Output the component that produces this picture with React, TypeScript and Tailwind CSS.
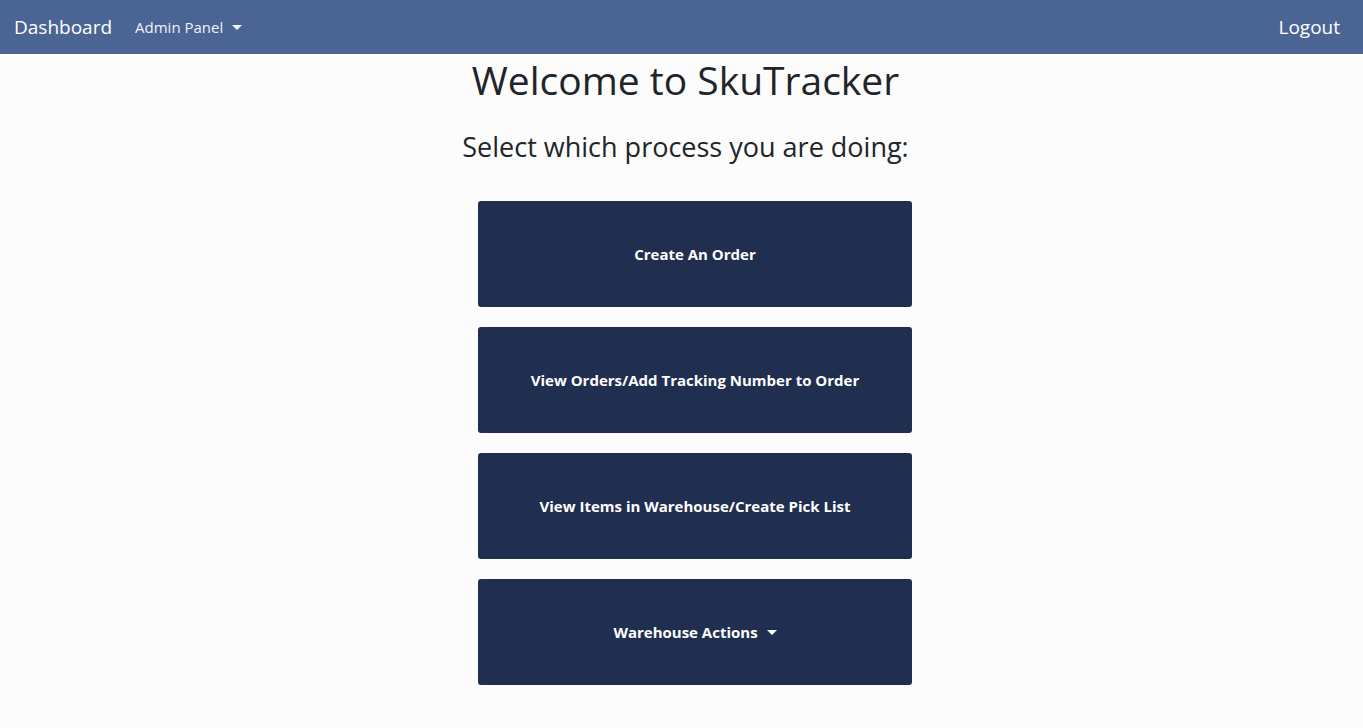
import React from 'react';

const Caret = () => (
    <span className="inline-block ml-[9px] align-[3px] border-x-[5px] border-x-transparent border-t-[5px] border-t-current" />
);

export default function App() {
    const actions = [
        { label: 'Create An Order' },
        { label: 'View Orders/Add Tracking Number to Order' },
        { label: 'View Items in Warehouse/Create Pick List' },
        { label: 'Warehouse Actions', dropdown: true },
    ];

    return (
        <div className="min-h-[728px] bg-[#fcfcfc] text-[#212529]" style={{ fontFamily: '"Open Sans", "Noto Sans", sans-serif' }}>
            {/* navbar */}
            <nav className="h-[54px] bg-[#4a6594] flex items-center px-[14px] text-white">
                <span className="text-[19px] mr-[23px]">Dashboard</span>
                <span className="text-[15px] text-white/95">
                    Admin Panel
                    <Caret />
                </span>
                <span className="ml-auto mr-[9px] text-[19px]">Logout</span>
            </nav>

            <div className="flex flex-col items-center">
                <h1 className="text-[39px] leading-[48px] mt-[2px] pl-2 font-medium">Welcome to SkuTracker</h1>
                <h3 className="text-[27px] leading-[34px] mt-[26px] pl-2 font-medium">Select which process you are doing:</h3>

                <div className="flex flex-col gap-5 mt-[37px] pl-[27px] pb-10">
                    {actions.map((a, i) => (
                        <button
                            key={i}
                            className="w-[434px] h-[106px] rounded-[3px] bg-[#202e50] text-white text-[15px] font-bold"
                        >
                            {a.label}
                            {a.dropdown && <Caret />}
                        </button>
                    ))}
                </div>
            </div>
        </div>
    );
}
